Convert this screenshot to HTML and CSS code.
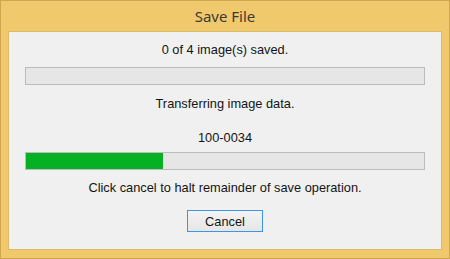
FILE: index.html
```html
<!DOCTYPE html>
<html>
<head>
<meta charset="utf-8">
<link rel="stylesheet" href="styles.css">
</head>
<body>
<div class="window">
  <div class="titlebar">Save File</div>
  <div class="client">
    <div class="line line-first">0 of 4 image(s) saved.</div>
    <div class="bar bar-first"><div class="fill" style="width:0%"></div></div>
    <div class="line line-second">Transferring image data.</div>
    <div class="line line-third">100-0034</div>
    <div class="bar bar-second"><div class="fill" style="width:34.5%"></div></div>
    <div class="line line-fourth">Click cancel to halt remainder of save operation.</div>
    <button class="btn">Cancel</button>
  </div>
</div>
</body>
</html>
```
FILE: styles.css
```css
html, body {
  margin: 0;
  padding: 0;
  background: #f1c96d;
}
.window {
  box-sizing: border-box;
  width: 450px;
  height: 259px;
  border: 1px solid #cfa64c;
  background: #f1c96d;
  padding: 0 7px 8px 7px;
  display: flex;
  flex-direction: column;
}
.titlebar {
  height: 30px;
  line-height: 31px;
  text-align: center;
  font-family: "Noto Sans", "Open Sans", sans-serif;
  font-size: 15px;
  color: #3d3a33;
}
.client {
  box-sizing: border-box;
  flex: 1;
  background: #f0f0f0;
  border: 1px solid #dcbc6c;
  display: flex;
  flex-direction: column;
  align-items: center;
  padding-top: 11px;
  font-family: "Liberation Sans", Arial, sans-serif;
  font-size: 12.8px;
  color: #141414;
}
.line {
  height: 14px;
  line-height: 14px;
  text-align: center;
}
.line-second { margin-top: 12px; }
.line-third { margin-top: 20px; }
.line-fourth { margin-top: 11px; }
.bar {
  box-sizing: border-box;
  width: 400px;
  height: 18px;
  margin-left: -1px;
  border: 1px solid #bcbcbc;
  background: #e6e6e6;
  display: flex;
}
.bar-first { margin-top: 10px; }
.bar-second { margin-top: 7px; }
.fill {
  height: 100%;
  background: #06b025;
}
.btn {
  box-sizing: border-box;
  margin-top: 15px;
  width: 76px;
  height: 22px;
  border: 1px solid #3c95e8;
  background: linear-gradient(#f3f3f3, #e6e6e6);
  font-family: "Liberation Sans", Arial, sans-serif;
  font-size: 12.8px;
  color: #141414;
  padding: 0;
}
```
